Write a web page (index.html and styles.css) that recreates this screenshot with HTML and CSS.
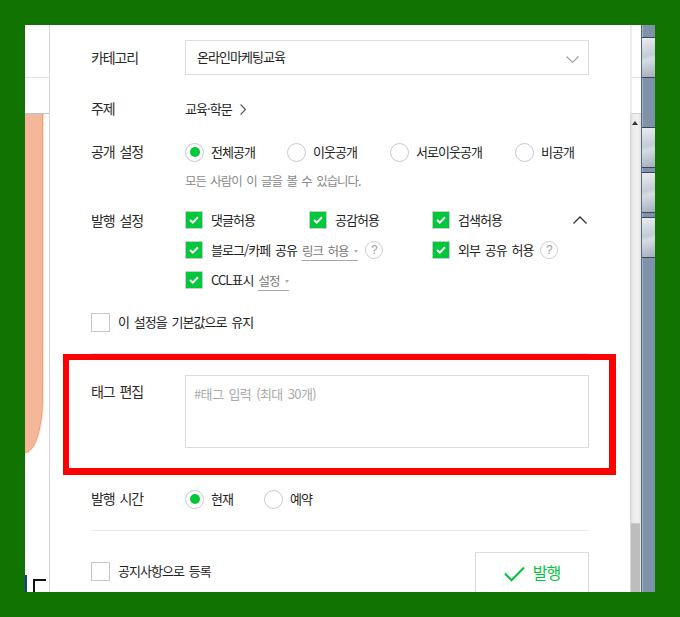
FILE: index.html
```html
<!DOCTYPE html>
<html lang="ko">
<head>
<meta charset="utf-8">
<title>발행</title>
<link rel="stylesheet" href="styles.css">
</head>
<body>
<div class="frame">
  <div class="side">
    <div class="side-top"></div>
    <div class="side-mid"></div>
    <div class="side-peach"></div>
    <div class="side-glyph"><span class="g-blue"></span><span class="g-black"></span></div>
  </div>

  <div class="main">
    <div class="row cat">
      <div class="label">카테고리</div>
      <div class="select">
        <span class="ctl">온라인마케팅교육</span>
        <svg class="chev-down" width="13" height="7" viewBox="0 0 13 7"><polyline points="0.5,0.5 6.5,6.3 12.5,0.5" fill="none" stroke="#9a9a9a" stroke-width="1.1"/></svg>
      </div>
    </div>

    <div class="row subject">
      <div class="label">주제</div>
      <div class="subject-val">
        <span class="ctl">교육·학문</span>
        <svg width="6" height="11" viewBox="0 0 6 11"><polyline points="0.6,0.5 5.4,5.5 0.6,10.5" fill="none" stroke="#555" stroke-width="1.1"/></svg>
      </div>
    </div>

    <div class="row pub">
      <div class="label">공개 설정</div>
      <div class="radio w102"><i class="rd on"></i><span class="ctl">전체공개</span></div>
      <div class="radio w103"><i class="rd"></i><span class="ctl">이웃공개</span></div>
      <div class="radio w125"><i class="rd"></i><span class="ctl">서로이웃공개</span></div>
      <div class="radio"><i class="rd"></i><span class="ctl">비공개</span></div>
    </div>
    <div class="desc">모든 사람이 이 글을 볼 수 있습니다.</div>

    <div class="settings">
      <div class="label">발행 설정</div>
      <div class="grid">
        <div class="cb"><i class="box"><svg width="10" height="8" viewBox="0 0 10 8"><polyline points="1,4 3.8,6.6 9,1.3" fill="none" stroke="#fff" stroke-width="2"/></svg></i><span class="ctl">댓글허용</span></div>
        <div class="cb"><i class="box"><svg width="10" height="8" viewBox="0 0 10 8"><polyline points="1,4 3.8,6.6 9,1.3" fill="none" stroke="#fff" stroke-width="2"/></svg></i><span class="ctl">공감허용</span></div>
        <div class="cb"><i class="box"><svg width="10" height="8" viewBox="0 0 10 8"><polyline points="1,4 3.8,6.6 9,1.3" fill="none" stroke="#fff" stroke-width="2"/></svg></i><span class="ctl">검색허용</span></div>
        <div class="caret"><svg width="14" height="8" viewBox="0 0 14 8"><polyline points="0.5,7.5 7,1 13.5,7.5" fill="none" stroke="#333" stroke-width="1.3"/></svg></div>

        <div class="cb span2"><i class="box"><svg width="10" height="8" viewBox="0 0 10 8"><polyline points="1,4 3.8,6.6 9,1.3" fill="none" stroke="#fff" stroke-width="2"/></svg></i><span class="ctl">블로그/카페 공유</span><span class="link">링크 허용<b class="tri"></b></span><span class="help">?</span></div>
        <div class="cb"><i class="box"><svg width="10" height="8" viewBox="0 0 10 8"><polyline points="1,4 3.8,6.6 9,1.3" fill="none" stroke="#fff" stroke-width="2"/></svg></i><span class="ctl">외부 공유 허용</span><span class="help">?</span></div>
        <div></div>

        <div class="cb span2"><i class="box"><svg width="10" height="8" viewBox="0 0 10 8"><polyline points="1,4 3.8,6.6 9,1.3" fill="none" stroke="#fff" stroke-width="2"/></svg></i><span class="ctl">CCL표시</span><span class="link">설정<b class="tri"></b></span></div>
      </div>
    </div>

    <div class="row keep">
      <i class="ebox"></i><span class="ctl">이 설정을 기본값으로 유지</span>
    </div>

    <div class="sep"></div>

    <div class="row tagrow">
      <div class="label">태그 편집</div>
      <div class="tagbox">#태그 입력 (최대 30개)</div>
    </div>

    <div class="row time">
      <div class="label">발행 시간</div>
      <div class="radio w79"><i class="rd on"></i><span class="ctl">현재</span></div>
      <div class="radio"><i class="rd"></i><span class="ctl">예약</span></div>
    </div>

    <div class="sep"></div>

    <div class="bottom">
      <div class="notice"><i class="ebox"></i><span class="ctl">공지사항으로 등록</span></div>
      <div class="btn">
        <svg class="btn-check" width="21" height="16" viewBox="0 0 21 16"><polyline points="1,7.5 7.5,14.2 20,1.5" fill="none" stroke="#00c73c" stroke-width="2.1"/></svg>
        <span>발행</span>
      </div>
    </div>

    <div class="mark"></div>
  </div>

  <div class="track">
    <div class="track-top"><div class="tt-line"></div></div>
    <div class="track-body">
      <i class="arrow-up"></i>
      <div class="thumb"></div>
    </div>
  </div>

  <div class="rail">
    <div class="tile t1"></div>
    <div class="tile t2"></div>
    <div class="tile t3"></div>
    <div class="tile t3"></div>
  </div>
</div>
</body>
</html>
```

FILE: styles.css
```css
* { box-sizing: border-box; }
html, body { margin: 0; padding: 0; }
body {
  background: #127400;
  width: 680px;
  height: 617px;
  overflow: hidden;
  font-family: "Noto Sans CJK KR", "Malgun Gothic", sans-serif;
  color: #222;
}
i, b { font-style: normal; display: block; flex: none; }

.frame {
  margin: 25px 25px 0 25px;
  width: 630px;
  height: 567px;
  display: flex;
  overflow: hidden;
  background: #fff;
}

/* left background strip */
.side {
  width: 25px;
  flex: none;
  border-right: 1px solid #d6d6d6;
  display: flex;
  flex-direction: column;
}
.side-top { height: 53px; border-bottom: 1px solid #e4e4e4; }
.side-mid { height: 36px; border-bottom: 1px solid #bcc3ce; }
.side-peach {
  width: 18px;
  height: 339px;
  background: #f5b79a;
  border-right: 1px solid #f29b68;
  border-bottom: 1px solid #f29b68;
  border-bottom-right-radius: 18px 55px;
  box-shadow: 1px 0 0 #fde4d6;
}
.side-glyph { margin-top: auto; height: 17px; display: flex; }
.g-blue { display: block; width: 2px; background: #1b3d8f; }
.g-black {
  display: block;
  width: 13px;
  margin: 4px 0 0 6px;
  border-top: 2px solid #111;
  border-left: 2px solid #111;
}

/* main panel */
.main {
  flex: 1;
  position: relative;
  padding: 15px 41px 0 41px;
  overflow: hidden;
}
.row { display: flex; align-items: center; }
.label {
  width: 94px;
  flex: none;
  font-size: 14px;
  letter-spacing: -1.1px;
  word-spacing: 2px;
  line-height: 20px;
  padding-bottom: 2px;
  color: #2a2a2a;
  white-space: nowrap;
}
.ctl {
  font-size: 13px;
  letter-spacing: -0.95px;
  word-spacing: 2px;
  line-height: 20px;
  padding-bottom: 1px;
  color: #222;
  white-space: nowrap;
}

.cat { height: 35px; }
.select {
  flex: 1;
  height: 35px;
  border: 1px solid #dedede;
  display: flex;
  align-items: center;
  justify-content: space-between;
  padding: 0 9px 0 11px;
}
.chev-down { margin-top: 3px; }

.subject { margin-top: 24px; height: 20px; }
.subject-val { display: flex; align-items: center; gap: 8px; }

.pub { margin-top: 23px; height: 20px; }
.radio { display: flex; align-items: center; gap: 7px; flex: none; }
.w102 { width: 102px; }
.w103 { width: 103px; }
.w125 { width: 125px; }
.w79 { width: 79px; }
.rd {
  width: 19px;
  height: 19px;
  border-radius: 50%;
  border: 1px solid #c9c9c9;
  background: #fff;
  display: flex;
  align-items: center;
  justify-content: center;
}
.rd.on::after {
  content: "";
  width: 10px;
  height: 10px;
  border-radius: 50%;
  background: #00c73c;
}

.desc {
  margin: 10px 0 0 94px;
  font-size: 12.5px;
  letter-spacing: -1.05px;
  word-spacing: 2px;
  line-height: 18px;
  color: #8a8a8a;
}

.settings { margin-top: 20px; display: flex; align-items: flex-start; }
.grid {
  flex: 1;
  display: grid;
  grid-template-columns: 124px 123px 1fr auto;
  grid-auto-rows: 20px;
  row-gap: 10px;
}
.span2 { grid-column: 1 / 3; }
.cb { display: flex; align-items: center; gap: 8px; }
.box {
  width: 18px;
  height: 18px;
  background: #00c73c;
  border: 1px solid #c4cfc7;
  border-radius: 1px;
  display: flex;
  align-items: center;
  justify-content: center;
}
.box svg { display: block; }
.caret { align-self: center; margin-right: 2px; display: flex; }
.link {
  display: flex;
  align-items: center;
  margin: 3px 0 0 -3px;
  font-size: 12.5px;
  letter-spacing: -1px;
  word-spacing: 2px;
  line-height: 18px;
  color: #777;
  border-bottom: 1px solid #a8a8a8;
  white-space: nowrap;
}
.tri {
  width: 0;
  height: 0;
  margin: 1px 0 0 6px;
  border-left: 2.5px solid transparent;
  border-right: 2.5px solid transparent;
  border-top: 3px solid #b0b0b0;
}
.help {
  width: 18px;
  height: 18px;
  flex: none;
  margin-left: -1px;
  border: 1px solid #cfcfcf;
  border-radius: 50%;
  font-family: "Liberation Sans", sans-serif;
  font-size: 12px;
  line-height: 16px;
  text-align: center;
  color: #a0a0a0;
}

.keep { margin-top: 22px; height: 20px; gap: 8px; }
.ebox {
  width: 19px;
  height: 19px;
  border: 1px solid #c6c6c6;
  background: #fff;
}

.sep { margin-top: 21px; height: 1px; background: #ebebeb; }

.tagrow { margin-top: 21px; align-items: flex-start; }
.tagrow .label { padding-top: 6px; }
.tagbox {
  flex: 1;
  height: 73px;
  border: 1px solid #dcdcdc;
  padding: 8px 8px;
  font-size: 13px;
  letter-spacing: -0.6px;
  word-spacing: 2px;
  line-height: 20px;
  color: #a9a9a9;
}

.time { margin-top: 41px; height: 20px; }

.bottom {
  margin-top: 21px;
  display: flex;
  justify-content: space-between;
  align-items: flex-start;
}
.notice { margin-top: 9px; display: flex; align-items: center; gap: 8px; }
.btn {
  width: 114px;
  height: 48px;
  border: 1px solid #dcdcdc;
  display: flex;
  justify-content: center;
  align-items: flex-start;
  gap: 8px;
  padding-top: 8px;
  color: #00c73c;
  font-size: 16px;
  letter-spacing: -1px;
  line-height: 22px;
}
.btn-check { display: block; margin-top: 5px; }

/* annotation overlay */
.mark {
  position: absolute;
  left: 13px;
  top: 329px;
  width: 553px;
  height: 121px;
  border-style: solid;
  border-color: #ff0000;
  border-width: 6px 7px 7px 6px;
}

/* scrollbar track */
.track { width: 11px; flex: none; display: flex; flex-direction: column; }
.track-top {
  height: 89px;
  background: #fff;
  border-left: 2px solid #ececec;
  border-bottom: 1px solid #d2d2d2;
}
.tt-line { height: 53px; border-bottom: 1px solid #e4e4e4; }
.track-body {
  flex: 1;
  background: linear-gradient(to right, #d3d3d3 0, #ebebeb 25%, #f1f1f1 70%, #e3e3e3 100%);
  display: flex;
  flex-direction: column;
}
.arrow-up {
  width: 0;
  height: 0;
  margin: 7px 0 0 2px;
  border-left: 3px solid transparent;
  border-right: 3px solid transparent;
  border-bottom: 4px solid #333;
}
.thumb {
  margin: auto 0 0 1px;
  width: 9px;
  height: 69px;
  background: #bdbdbd;
  border-top: 1px solid #cacaca;
}

/* right desktop rail */
.rail {
  width: 14px;
  flex: none;
  background: #7e92aa;
  border-left: 1px solid #59677a;
  box-shadow: inset 1px 0 0 #a3b1c2;
  display: flex;
  flex-direction: column;
}
.tile {
  height: 41px;
  flex: none;
  background: linear-gradient(165deg, #e9edf1 0%, #c4ccd6 45%, #d6dce3 55%, #a3afbd 100%);
  border-top: 1px solid #3a4555;
  border-bottom: 1px solid #3a4555;
}
.t1 { margin-top: 12px; }
.t2 { margin-top: 49px; }
.t3 { margin-top: 4px; }
```
